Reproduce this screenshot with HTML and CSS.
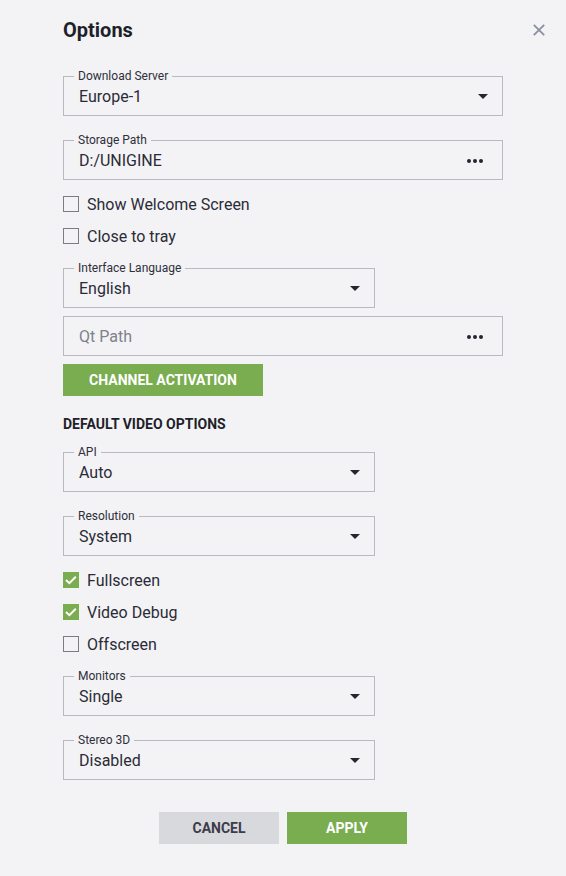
FILE: index.html
```html
<!DOCTYPE html>
<html>
<head>
<meta charset="utf-8">
<link rel="stylesheet" href="styles.css">
</head>
<body>
<div class="dialog">
  <div class="header">
    <h1 class="title">Options</h1>
    <button class="close" aria-label="Close">
      <svg width="12" height="12" viewBox="0 0 12 12"><path d="M0.8 0.8L11.2 11.2M11.2 0.8L0.8 11.2" stroke="#8a8fa0" stroke-width="1.8" fill="none"/></svg>
    </button>
  </div>

  <div class="field wide m-first">
    <span class="legend">Download Server</span>
    <span class="value">Europe-1</span>
    <span class="arrow"></span>
  </div>

  <div class="field wide m24">
    <span class="legend">Storage Path</span>
    <span class="value">D:/UNIGINE</span>
    <span class="dots"><i></i><i></i><i></i></span>
  </div>

  <div class="checks m8">
    <label class="check"><span class="box"></span>Show Welcome Screen</label>
    <label class="check"><span class="box"></span>Close to tray</label>
  </div>

  <div class="field narrow m16">
    <span class="legend">Interface Language</span>
    <span class="value">English</span>
    <span class="arrow"></span>
  </div>

  <div class="field wide m8">
    <span class="value placeholder">Qt Path</span>
    <span class="dots"><i></i><i></i><i></i></span>
  </div>

  <button class="btn green channel">CHANNEL ACTIVATION</button>

  <h2 class="section">DEFAULT VIDEO OPTIONS</h2>

  <div class="field narrow m-api">
    <span class="legend">API</span>
    <span class="value">Auto</span>
    <span class="arrow"></span>
  </div>

  <div class="field narrow m24">
    <span class="legend">Resolution</span>
    <span class="value">System</span>
    <span class="arrow"></span>
  </div>

  <div class="checks m8">
    <label class="check"><span class="box on"><svg width="16" height="16" viewBox="0 0 16 16"><path d="M3 8L6.4 11.2L12.8 4.8" stroke="#fff" stroke-width="2" fill="none"/></svg></span>Fullscreen</label>
    <label class="check"><span class="box on"><svg width="16" height="16" viewBox="0 0 16 16"><path d="M3 8L6.4 11.2L12.8 4.8" stroke="#fff" stroke-width="2" fill="none"/></svg></span>Video Debug</label>
    <label class="check"><span class="box"></span>Offscreen</label>
  </div>

  <div class="field narrow m16">
    <span class="legend">Monitors</span>
    <span class="value">Single</span>
    <span class="arrow"></span>
  </div>

  <div class="field narrow m24">
    <span class="legend">Stereo 3D</span>
    <span class="value">Disabled</span>
    <span class="arrow"></span>
  </div>

  <div class="actions">
    <button class="btn grey">CANCEL</button>
    <button class="btn green">APPLY</button>
  </div>
</div>
</body>
</html>
```

FILE: styles.css
```css
* { box-sizing: border-box; }
html, body {
  margin: 0;
  padding: 0;
  background: #f3f3f6;
}
body {
  font-family: Roboto, "Liberation Sans", sans-serif;
  color: #2b2b36;
  width: 566px;
  height: 876px;
  overflow: hidden;
}
.dialog {
  padding: 0 63px;
  display: flex;
  flex-direction: column;
  align-items: flex-start;
}
.header {
  width: 100%;
  height: 62px;
  display: flex;
  align-items: flex-start;
  justify-content: space-between;
  position: relative;
}
.title {
  margin: 18px 0 0 0;
  font-size: 20px;
  font-weight: 700;
  line-height: 24px;
  color: #1f1f2a;
}
.close {
  position: absolute;
  right: -42px;
  top: 24px;
  border: 0;
  background: none;
  padding: 0;
  width: 12px;
  height: 12px;
  display: block;
}
.close svg { display: block; }

.field {
  position: relative;
  height: 40px;
  border: 1px solid #b9bac1;
  display: flex;
  align-items: center;
  padding: 2px 14px 0 15px;
  flex-shrink: 0;
}
.wide { width: 440px; }
.narrow { width: 312px; }
.m-first { margin-top: 14px; }
.m24 { margin-top: 24px; }
.m16 { margin-top: 16px; }
.m8 { margin-top: 8px; }
.m-api { margin-top: 21px; }

.legend {
  position: absolute;
  left: 10px;
  top: -8px;
  padding: 0 4px;
  background: #f3f3f6;
  font-size: 12px;
  line-height: 14px;
  color: #2f2f3a;
}
.value {
  flex: 1;
  font-size: 16px;
  line-height: 20px;
  color: #2b2b36;
}
.placeholder { color: #7f818c; }
.arrow {
  width: 0;
  height: 0;
  border-left: 5px solid transparent;
  border-right: 5px solid transparent;
  border-top: 5px solid #25252f;
  margin-top: -1px;
}
.dots {
  display: flex;
  gap: 2px;
  margin-right: 5px;
}
.dots i {
  width: 4px;
  height: 4px;
  border-radius: 50%;
  background: #25252f;
  display: block;
}

.checks {
  display: flex;
  flex-direction: column;
}
.check {
  height: 32px;
  display: flex;
  align-items: center;
  font-size: 16px;
  color: #2b2b36;
}
.box {
  width: 16px;
  height: 16px;
  border: 1px solid #7b7c85;
  margin-right: 8px;
  display: block;
  position: relative;
  background: transparent;
}
.box.on {
  background: #7aac50;
  border-color: #7aac50;
}
.box.on svg {
  position: absolute;
  left: -1px;
  top: -1px;
}

.btn {
  font-family: Roboto, "Liberation Sans", sans-serif;
  font-weight: 700;
  font-size: 14px;
  border: 0;
  height: 32px;
  padding: 0;
  letter-spacing: 0;
}
.green { background: #7aac50; color: #fff; }
.grey { background: #d8d9dd; color: #3c3c4a; }
.channel {
  width: 200px;
  margin-top: 8px;
}
.section {
  margin: 21px 0 0 0;
  font-size: 14px;
  line-height: 14px;
  font-weight: 700;
  color: #1f1f2a;
}
.actions {
  align-self: center;
  display: flex;
  gap: 8px;
  margin-top: 32px;
}
.actions .btn { width: 120px; }
```
